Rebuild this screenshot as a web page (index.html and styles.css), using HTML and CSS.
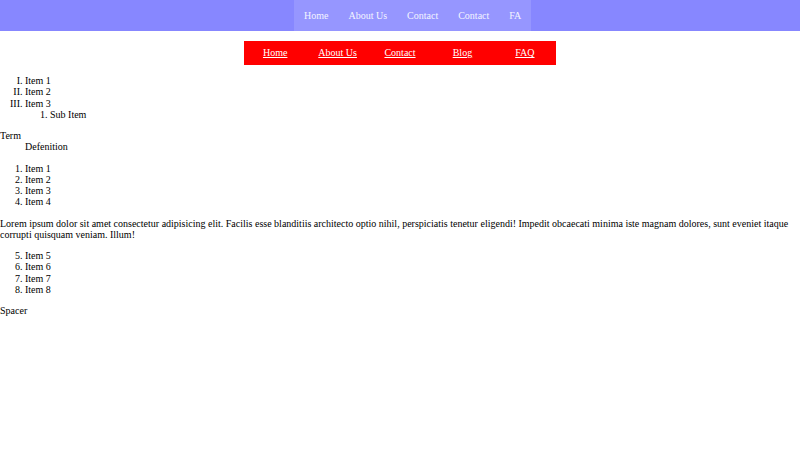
FILE: index.html
```html
<!DOCTYPE html>
<html lang="en">
<head>
<meta charset="utf-8">
<title>Lists</title>
<link rel="stylesheet" href="styles.css">
</head>
<body>
<header class="topbar">
  <nav class="topnav">
    <a href="#">Home</a>
    <a href="#">About Us</a>
    <a href="#">Contact</a>
    <a href="#">Contact</a>
    <a href="#">FA</a>
  </nav>
</header>
<ul class="rednav">
  <li><a href="#">Home</a></li>
  <li><a href="#">About Us</a></li>
  <li><a href="#">Contact</a></li>
  <li><a href="#">Blog</a></li>
  <li><a href="#">FAQ</a></li>
</ul>
<ol class="roman">
  <li>Item 1</li>
  <li>Item 2</li>
  <li>Item 3
    <ol class="sub">
      <li>Sub Item</li>
    </ol>
  </li>
</ol>
<dl class="deflist">
  <dt>Term</dt>
  <dd>Defenition</dd>
</dl>
<ol class="list">
  <li>Item 1</li>
  <li>Item 2</li>
  <li>Item 3</li>
  <li>Item 4</li>
</ol>
<p class="text">Lorem ipsum dolor sit amet consectetur adipisicing elit. Facilis esse blanditiis architecto optio nihil, perspiciatis tenetur eligendi! Impedit obcaecati minima iste magnam dolores, sunt eveniet itaque corrupti quisquam veniam. Illum!</p>
<ol class="list" start="5">
  <li>Item 5</li>
  <li>Item 6</li>
  <li>Item 7</li>
  <li>Item 8</li>
</ol>
<p class="text">Spacer</p>
</body>
</html>
```
FILE: styles.css
```css
html, body {
  margin: 0;
  padding: 0;
  background: #ffffff;
}
body {
  font-family: "Liberation Serif", "Times New Roman", serif;
  font-size: 10px;
  line-height: 11.25px;
  color: #000000;
}
.topbar {
  height: 31px;
  background: #8787ff;
  display: flex;
  justify-content: center;
  padding-left: 25px;
  box-sizing: border-box;
}
.topnav {
  width: 237px;
  height: 31px;
  background: #9696ff;
  display: flex;
  align-items: center;
  overflow: hidden;
  white-space: nowrap;
}
.topnav a {
  color: #f4f4ff;
  text-decoration: none;
  padding: 0 10px;
  flex: none;
}
.rednav {
  list-style: none;
  margin: 10px auto;
  padding: 6.4px 0;
  width: 312px;
  background: #ff0000;
  display: flex;
}
.rednav li {
  flex: 1;
  text-align: center;
}
.rednav a {
  color: #ffffff;
  text-decoration: underline;
}
.roman {
  list-style-type: upper-roman;
  margin: 10px 0;
  padding-left: 25px;
}
.sub {
  list-style-type: decimal;
  margin: 0;
  padding-left: 25px;
}
.deflist {
  margin: 10px 0;
}
.deflist dd {
  margin-left: 25px;
}
.list {
  margin: 10px 0;
  padding-left: 25px;
}
.text {
  margin: 10px 0;
}
```
